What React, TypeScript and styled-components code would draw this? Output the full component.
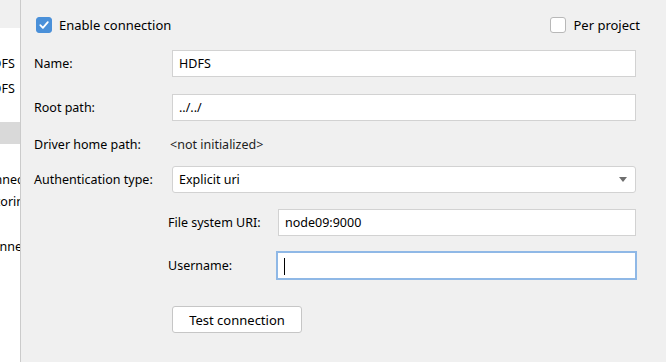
import React, { useState } from 'react';
import styled, { createGlobalStyle } from 'styled-components';

const GlobalStyle = createGlobalStyle`
  html, body {
    margin: 0;
    padding: 0;
    background: #f0f0f0;
  }
  body {
    font-family: 'Noto Sans', 'Open Sans', sans-serif;
    font-size: 12.5px;
    color: #000;
  }
`;

type SideItem = { text: string; shift: number; top: number; selected?: boolean };

const sideItems: SideItem[] = [
  { text: 'HDFS', shift: -17, top: 24 },
  { text: 'HDFS', shift: -17, top: 3 },
  { text: '', shift: 0, top: 23, selected: true },
  { text: 'Connection', shift: -21, top: 24 },
  { text: 'Monitoring', shift: -34, top: 0 },
  { text: 'Connection', shift: -16, top: 23 },
];

export default function App() {
  const [enabled, setEnabled] = useState(true);
  const [perProject, setPerProject] = useState(false);

  return (
    <>
      <GlobalStyle />
      <Window>
        <Sidebar>
          <SidebarHead />
          <SidebarList>
            {sideItems.map((it, i) => (
              <SideRow key={i} $top={it.top} $selected={it.selected}>
                <SideText $shift={it.shift}>{it.text}</SideText>
              </SideRow>
            ))}
          </SidebarList>
        </Sidebar>

        <Main>
          <TopRow>
            <CheckLabel>
              <Check $checked={enabled} onClick={() => setEnabled(!enabled)}>
                {enabled && (
                  <svg width="12" height="12" viewBox="0 0 12 12">
                    <path d="M2.3 6.2 L4.9 8.8 L9.8 3.2" fill="none" stroke="#fff" strokeWidth="1.8" strokeLinecap="round" strokeLinejoin="round" />
                  </svg>
                )}
              </Check>
              Enable connection
            </CheckLabel>
            <CheckLabel>
              <Check $checked={perProject} onClick={() => setPerProject(!perProject)} />
              Per project
            </CheckLabel>
          </TopRow>

          <FormRow $top={17}>
            <Label $width={138}>Name:</Label>
            <Input defaultValue="HDFS" />
          </FormRow>
          <FormRow $top={17}>
            <Label $width={138}>Root path:</Label>
            <Input defaultValue="../../" />
          </FormRow>
          <FormRow $top={10} $height={27}>
            <Label $width={136}>Driver home path:</Label>
            <Value>&lt;not initialized&gt;</Value>
          </FormRow>
          <FormRow $top={8}>
            <Label $width={138}>Authentication type:</Label>
            <Select>
              <span>Explicit uri</span>
              <Arrow />
            </Select>
          </FormRow>

          <SubForm>
            <FormRow $top={16}>
              <Label $width={110}>File system URI:</Label>
              <Input defaultValue="node09:9000" />
            </FormRow>
            <FormRow $top={16}>
              <Label $width={109}>Username:</Label>
              <InputWrap>
                <Input $focused defaultValue="" />
                <Caret />
              </InputWrap>
            </FormRow>
          </SubForm>

          <ButtonRow>
            <Button>Test connection</Button>
          </ButtonRow>
        </Main>
      </Window>
    </>
  );
}

const Window = styled.div`
  display: flex;
  width: 666px;
  height: 362px;
  overflow: hidden;
`;

const Sidebar = styled.div`
  width: 20px;
  flex-shrink: 0;
  display: flex;
  flex-direction: column;
  border-right: 1px solid #cbcbcb;
  background: #fff;
  overflow: hidden;
`;

const SidebarHead = styled.div`
  height: 28px;
  background: #f0f0f0;
`;

const SidebarList = styled.div`
  flex: 1;
  display: flex;
  flex-direction: column;
  overflow: hidden;
`;

const SideRow = styled.div<{ $top: number; $selected?: boolean }>`
  height: 22px;
  margin-top: ${(p) => p.$top}px;
  display: flex;
  align-items: center;
  white-space: nowrap;
  overflow: hidden;
  background: ${(p) => (p.$selected ? '#d9d9d9' : 'transparent')};
`;

const SideText = styled.span<{ $shift: number }>`
  flex: 1;
  min-width: 0;
  overflow: hidden;
  margin-left: ${(p) => p.$shift}px;
`;

const Main = styled.div`
  flex: 1;
  display: flex;
  flex-direction: column;
  padding: 17px 30px 0 13px;
`;

const TopRow = styled.div`
  display: flex;
  justify-content: space-between;
  align-items: center;
  height: 16px;
  padding-left: 2px;
  margin-right: -4px;
`;

const CheckLabel = styled.label`
  display: flex;
  align-items: center;
  gap: 7px;
  font-size: 13px;
`;

const Check = styled.span<{ $checked: boolean }>`
  width: 16px;
  height: 16px;
  box-sizing: border-box;
  border-radius: 3px;
  display: flex;
  align-items: center;
  justify-content: center;
  background: ${(p) => (p.$checked ? '#4a90d9' : '#fff')};
  border: 1px solid ${(p) => (p.$checked ? '#4a90d9' : '#b8b8b8')};
`;

const FormRow = styled.div<{ $top: number; $height?: number }>`
  display: flex;
  align-items: center;
  margin-top: ${(p) => p.$top}px;
  height: ${(p) => p.$height ?? 27}px;
`;

const Label = styled.div<{ $width: number }>`
  width: ${(p) => p.$width}px;
  flex-shrink: 0;
`;

const Value = styled.div`
  color: #1e1e1e;
`;

const Input = styled.input<{ $focused?: boolean }>`
  flex: 1;
  min-width: 0;
  height: 27px;
  box-sizing: border-box;
  font: inherit;
  padding: 0 6px;
  background: #fff;
  border: 1px solid ${(p) => (p.$focused ? '#8fb8e6' : '#d2d2d2')};
  box-shadow: ${(p) => (p.$focused ? '0 0 0 1px #8fb8e6' : 'none')};
  border-radius: 0;
  outline: none;
`;

const InputWrap = styled.div`
  flex: 1;
  display: flex;
  position: relative;
`;

const Caret = styled.span`
  position: absolute;
  left: 7px;
  top: 6px;
  width: 1px;
  height: 17px;
  background: #000;
`;

const Select = styled.div`
  flex: 1;
  height: 27px;
  box-sizing: border-box;
  display: flex;
  align-items: center;
  justify-content: space-between;
  padding: 0 8px 0 6px;
  background: #fff;
  border: 1px solid #d2d2d2;
  border-radius: 3px;
`;

const Arrow = styled.span`
  width: 0;
  height: 0;
  border-left: 4px solid transparent;
  border-right: 4px solid transparent;
  border-top: 5px solid #6e6e6e;
`;

const SubForm = styled.div`
  display: flex;
  flex-direction: column;
  padding-left: 134px;
`;

const ButtonRow = styled.div`
  display: flex;
  margin-top: 27px;
  padding-left: 138px;
`;

const Button = styled.button`
  width: 130px;
  height: 27px;
  box-sizing: border-box;
  font: inherit;
  font-size: 13px;
  color: #000;
  background: #fff;
  border: 1px solid #c6c6c6;
  border-radius: 3px;
`;
